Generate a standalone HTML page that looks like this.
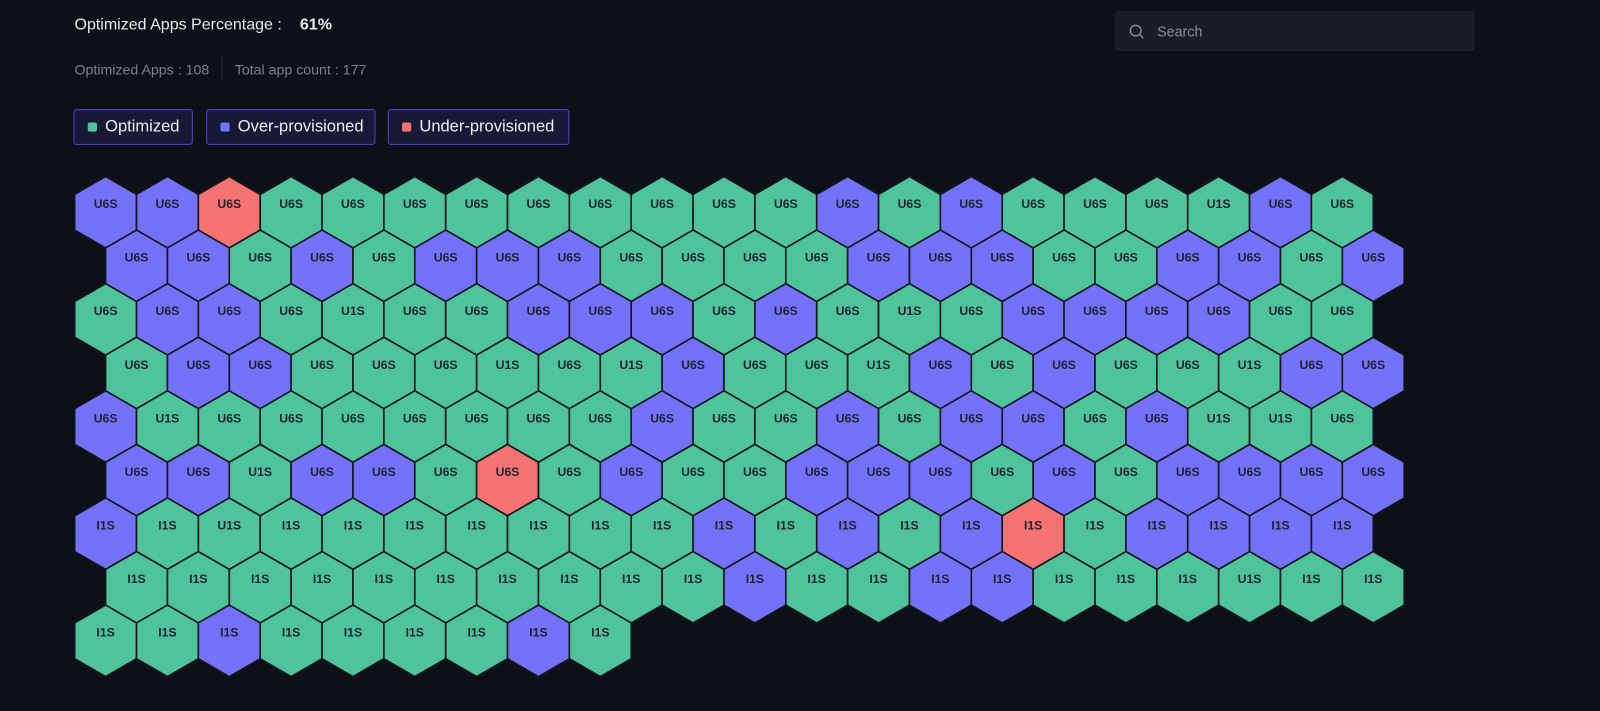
<!DOCTYPE html>
<html><head><meta charset="utf-8"><style>
body{margin:0;background:#0d1017;width:1600px;height:710px;overflow:hidden;font-family:"Liberation Sans",sans-serif}
#w{position:absolute;left:0;top:0;width:1568px;height:696px;transform:scale(1.0204);transform-origin:0 0}
.t1{position:absolute;left:73px;top:16px;font-size:15.7px;color:#e9eaee;font-weight:500}
.t1 b{margin-left:9px;font-weight:700}
.t2{position:absolute;left:73px;top:60px;font-size:13.9px;color:#7c7f89;display:flex}
.t2 .sep{width:1px;height:22px;background:#2a2d36;margin:-4px 12px 0}
.lg{position:absolute;top:107px;height:35px;border:1px solid #4b46c4;background:#181936;border-radius:3px;box-sizing:border-box;color:#eceef4;font-size:16.2px;display:flex;align-items:center;padding-left:13px}
.lg i{width:9px;height:9px;border-radius:2px;margin-right:8px;display:inline-block}
.srch{position:absolute;left:1093px;top:11px;width:352px;height:39px;background:#1a1d25;border:1px solid #20232c;border-radius:4px;box-sizing:border-box;color:#8a8d96;font-size:14px;display:flex;align-items:center;padding-left:12px}
svg.m{position:absolute;left:0;top:1px}
.g{fill:#4fc49c}.p{fill:#7472fa}.r{fill:#f77371}
use{stroke:#14171c;stroke-width:1.6}
text{font-family:"Liberation Sans",sans-serif;font-weight:700;font-size:12px;fill:#1f2330;text-anchor:middle;dominant-baseline:central}
</style></head><body><div id="w">
<div class="t1">Optimized Apps Percentage :&nbsp; <b>61%</b></div>
<div class="t2"><span>Optimized Apps : 108</span><span class="sep"></span><span>Total app count : 177</span></div>
<div class="lg" style="left:72px;width:117px"><i style="background:#4fc49c"></i>Optimized</div>
<div class="lg" style="left:202px;width:166px"><i style="background:#7472fa"></i>Over-provisioned</div>
<div class="lg" style="left:380px;width:178px"><i style="background:#f77371"></i>Under-provisioned</div>
<div class="srch"><svg style="margin-right:12px" width="16" height="16" viewBox="0 0 16 16"><circle cx="7" cy="7" r="5.2" fill="none" stroke="#8a8d96" stroke-width="1.4"/><path d="M11 11l3.5 3.5" stroke="#8a8d96" stroke-width="1.4"/></svg>Search</div>
<svg class="m" width="1568" height="696">
<defs><polygon id="h" points="0,-35 30.3,-17.5 30.3,17.5 0,35 -30.3,17.5 -30.3,-17.5"/></defs>
<g transform="translate(0,207)">
<use href="#h" x="103.5" class="p"/><use href="#h" x="164.1" class="p"/><use href="#h" x="224.7" class="r"/><use href="#h" x="285.3" class="g"/><use href="#h" x="345.9" class="g"/><use href="#h" x="406.5" class="g"/><use href="#h" x="467.1" class="g"/><use href="#h" x="527.7" class="g"/><use href="#h" x="588.3" class="g"/><use href="#h" x="648.9" class="g"/><use href="#h" x="709.5" class="g"/><use href="#h" x="770.1" class="g"/><use href="#h" x="830.7" class="p"/><use href="#h" x="891.3" class="g"/><use href="#h" x="951.9" class="p"/><use href="#h" x="1012.5" class="g"/><use href="#h" x="1073.1" class="g"/><use href="#h" x="1133.7" class="g"/><use href="#h" x="1194.3" class="g"/><use href="#h" x="1254.9" class="p"/><use href="#h" x="1315.5" class="g"/>
</g>
<g transform="translate(0,199)">
<text x="103.5">U6S</text><text x="164.1">U6S</text><text x="224.7">U6S</text><text x="285.3">U6S</text><text x="345.9">U6S</text><text x="406.5">U6S</text><text x="467.1">U6S</text><text x="527.7">U6S</text><text x="588.3">U6S</text><text x="648.9">U6S</text><text x="709.5">U6S</text><text x="770.1">U6S</text><text x="830.7">U6S</text><text x="891.3">U6S</text><text x="951.9">U6S</text><text x="1012.5">U6S</text><text x="1073.1">U6S</text><text x="1133.7">U6S</text><text x="1194.3">U1S</text><text x="1254.9">U6S</text><text x="1315.5">U6S</text>
</g>
<g transform="translate(0,259.5)">
<use href="#h" x="133.8" class="p"/><use href="#h" x="194.4" class="p"/><use href="#h" x="255" class="g"/><use href="#h" x="315.6" class="p"/><use href="#h" x="376.2" class="g"/><use href="#h" x="436.8" class="p"/><use href="#h" x="497.4" class="p"/><use href="#h" x="558" class="p"/><use href="#h" x="618.6" class="g"/><use href="#h" x="679.2" class="g"/><use href="#h" x="739.8" class="g"/><use href="#h" x="800.4" class="g"/><use href="#h" x="861" class="p"/><use href="#h" x="921.6" class="p"/><use href="#h" x="982.2" class="p"/><use href="#h" x="1042.8" class="g"/><use href="#h" x="1103.4" class="g"/><use href="#h" x="1164" class="p"/><use href="#h" x="1224.6" class="p"/><use href="#h" x="1285.2" class="g"/><use href="#h" x="1345.8" class="p"/>
</g>
<g transform="translate(0,251.5)">
<text x="133.8">U6S</text><text x="194.4">U6S</text><text x="255">U6S</text><text x="315.6">U6S</text><text x="376.2">U6S</text><text x="436.8">U6S</text><text x="497.4">U6S</text><text x="558">U6S</text><text x="618.6">U6S</text><text x="679.2">U6S</text><text x="739.8">U6S</text><text x="800.4">U6S</text><text x="861">U6S</text><text x="921.6">U6S</text><text x="982.2">U6S</text><text x="1042.8">U6S</text><text x="1103.4">U6S</text><text x="1164">U6S</text><text x="1224.6">U6S</text><text x="1285.2">U6S</text><text x="1345.8">U6S</text>
</g>
<g transform="translate(0,312)">
<use href="#h" x="103.5" class="g"/><use href="#h" x="164.1" class="p"/><use href="#h" x="224.7" class="p"/><use href="#h" x="285.3" class="g"/><use href="#h" x="345.9" class="g"/><use href="#h" x="406.5" class="g"/><use href="#h" x="467.1" class="g"/><use href="#h" x="527.7" class="p"/><use href="#h" x="588.3" class="p"/><use href="#h" x="648.9" class="p"/><use href="#h" x="709.5" class="g"/><use href="#h" x="770.1" class="p"/><use href="#h" x="830.7" class="g"/><use href="#h" x="891.3" class="g"/><use href="#h" x="951.9" class="g"/><use href="#h" x="1012.5" class="p"/><use href="#h" x="1073.1" class="p"/><use href="#h" x="1133.7" class="p"/><use href="#h" x="1194.3" class="p"/><use href="#h" x="1254.9" class="g"/><use href="#h" x="1315.5" class="g"/>
</g>
<g transform="translate(0,304)">
<text x="103.5">U6S</text><text x="164.1">U6S</text><text x="224.7">U6S</text><text x="285.3">U6S</text><text x="345.9">U1S</text><text x="406.5">U6S</text><text x="467.1">U6S</text><text x="527.7">U6S</text><text x="588.3">U6S</text><text x="648.9">U6S</text><text x="709.5">U6S</text><text x="770.1">U6S</text><text x="830.7">U6S</text><text x="891.3">U1S</text><text x="951.9">U6S</text><text x="1012.5">U6S</text><text x="1073.1">U6S</text><text x="1133.7">U6S</text><text x="1194.3">U6S</text><text x="1254.9">U6S</text><text x="1315.5">U6S</text>
</g>
<g transform="translate(0,364.5)">
<use href="#h" x="133.8" class="g"/><use href="#h" x="194.4" class="p"/><use href="#h" x="255" class="p"/><use href="#h" x="315.6" class="g"/><use href="#h" x="376.2" class="g"/><use href="#h" x="436.8" class="g"/><use href="#h" x="497.4" class="g"/><use href="#h" x="558" class="g"/><use href="#h" x="618.6" class="g"/><use href="#h" x="679.2" class="p"/><use href="#h" x="739.8" class="g"/><use href="#h" x="800.4" class="g"/><use href="#h" x="861" class="g"/><use href="#h" x="921.6" class="p"/><use href="#h" x="982.2" class="g"/><use href="#h" x="1042.8" class="p"/><use href="#h" x="1103.4" class="g"/><use href="#h" x="1164" class="g"/><use href="#h" x="1224.6" class="g"/><use href="#h" x="1285.2" class="p"/><use href="#h" x="1345.8" class="p"/>
</g>
<g transform="translate(0,356.5)">
<text x="133.8">U6S</text><text x="194.4">U6S</text><text x="255">U6S</text><text x="315.6">U6S</text><text x="376.2">U6S</text><text x="436.8">U6S</text><text x="497.4">U1S</text><text x="558">U6S</text><text x="618.6">U1S</text><text x="679.2">U6S</text><text x="739.8">U6S</text><text x="800.4">U6S</text><text x="861">U1S</text><text x="921.6">U6S</text><text x="982.2">U6S</text><text x="1042.8">U6S</text><text x="1103.4">U6S</text><text x="1164">U6S</text><text x="1224.6">U1S</text><text x="1285.2">U6S</text><text x="1345.8">U6S</text>
</g>
<g transform="translate(0,417)">
<use href="#h" x="103.5" class="p"/><use href="#h" x="164.1" class="g"/><use href="#h" x="224.7" class="g"/><use href="#h" x="285.3" class="g"/><use href="#h" x="345.9" class="g"/><use href="#h" x="406.5" class="g"/><use href="#h" x="467.1" class="g"/><use href="#h" x="527.7" class="g"/><use href="#h" x="588.3" class="g"/><use href="#h" x="648.9" class="p"/><use href="#h" x="709.5" class="g"/><use href="#h" x="770.1" class="g"/><use href="#h" x="830.7" class="p"/><use href="#h" x="891.3" class="g"/><use href="#h" x="951.9" class="p"/><use href="#h" x="1012.5" class="p"/><use href="#h" x="1073.1" class="g"/><use href="#h" x="1133.7" class="p"/><use href="#h" x="1194.3" class="g"/><use href="#h" x="1254.9" class="g"/><use href="#h" x="1315.5" class="g"/>
</g>
<g transform="translate(0,409)">
<text x="103.5">U6S</text><text x="164.1">U1S</text><text x="224.7">U6S</text><text x="285.3">U6S</text><text x="345.9">U6S</text><text x="406.5">U6S</text><text x="467.1">U6S</text><text x="527.7">U6S</text><text x="588.3">U6S</text><text x="648.9">U6S</text><text x="709.5">U6S</text><text x="770.1">U6S</text><text x="830.7">U6S</text><text x="891.3">U6S</text><text x="951.9">U6S</text><text x="1012.5">U6S</text><text x="1073.1">U6S</text><text x="1133.7">U6S</text><text x="1194.3">U1S</text><text x="1254.9">U1S</text><text x="1315.5">U6S</text>
</g>
<g transform="translate(0,469.5)">
<use href="#h" x="133.8" class="p"/><use href="#h" x="194.4" class="p"/><use href="#h" x="255" class="g"/><use href="#h" x="315.6" class="p"/><use href="#h" x="376.2" class="p"/><use href="#h" x="436.8" class="g"/><use href="#h" x="497.4" class="r"/><use href="#h" x="558" class="g"/><use href="#h" x="618.6" class="p"/><use href="#h" x="679.2" class="g"/><use href="#h" x="739.8" class="g"/><use href="#h" x="800.4" class="p"/><use href="#h" x="861" class="p"/><use href="#h" x="921.6" class="p"/><use href="#h" x="982.2" class="g"/><use href="#h" x="1042.8" class="p"/><use href="#h" x="1103.4" class="g"/><use href="#h" x="1164" class="p"/><use href="#h" x="1224.6" class="p"/><use href="#h" x="1285.2" class="p"/><use href="#h" x="1345.8" class="p"/>
</g>
<g transform="translate(0,461.5)">
<text x="133.8">U6S</text><text x="194.4">U6S</text><text x="255">U1S</text><text x="315.6">U6S</text><text x="376.2">U6S</text><text x="436.8">U6S</text><text x="497.4">U6S</text><text x="558">U6S</text><text x="618.6">U6S</text><text x="679.2">U6S</text><text x="739.8">U6S</text><text x="800.4">U6S</text><text x="861">U6S</text><text x="921.6">U6S</text><text x="982.2">U6S</text><text x="1042.8">U6S</text><text x="1103.4">U6S</text><text x="1164">U6S</text><text x="1224.6">U6S</text><text x="1285.2">U6S</text><text x="1345.8">U6S</text>
</g>
<g transform="translate(0,522)">
<use href="#h" x="103.5" class="p"/><use href="#h" x="164.1" class="g"/><use href="#h" x="224.7" class="g"/><use href="#h" x="285.3" class="g"/><use href="#h" x="345.9" class="g"/><use href="#h" x="406.5" class="g"/><use href="#h" x="467.1" class="g"/><use href="#h" x="527.7" class="g"/><use href="#h" x="588.3" class="g"/><use href="#h" x="648.9" class="g"/><use href="#h" x="709.5" class="p"/><use href="#h" x="770.1" class="g"/><use href="#h" x="830.7" class="p"/><use href="#h" x="891.3" class="g"/><use href="#h" x="951.9" class="p"/><use href="#h" x="1012.5" class="r"/><use href="#h" x="1073.1" class="g"/><use href="#h" x="1133.7" class="p"/><use href="#h" x="1194.3" class="p"/><use href="#h" x="1254.9" class="p"/><use href="#h" x="1315.5" class="p"/>
</g>
<g transform="translate(0,514)">
<text x="103.5">I1S</text><text x="164.1">I1S</text><text x="224.7">U1S</text><text x="285.3">I1S</text><text x="345.9">I1S</text><text x="406.5">I1S</text><text x="467.1">I1S</text><text x="527.7">I1S</text><text x="588.3">I1S</text><text x="648.9">I1S</text><text x="709.5">I1S</text><text x="770.1">I1S</text><text x="830.7">I1S</text><text x="891.3">I1S</text><text x="951.9">I1S</text><text x="1012.5">I1S</text><text x="1073.1">I1S</text><text x="1133.7">I1S</text><text x="1194.3">I1S</text><text x="1254.9">I1S</text><text x="1315.5">I1S</text>
</g>
<g transform="translate(0,574.5)">
<use href="#h" x="133.8" class="g"/><use href="#h" x="194.4" class="g"/><use href="#h" x="255" class="g"/><use href="#h" x="315.6" class="g"/><use href="#h" x="376.2" class="g"/><use href="#h" x="436.8" class="g"/><use href="#h" x="497.4" class="g"/><use href="#h" x="558" class="g"/><use href="#h" x="618.6" class="g"/><use href="#h" x="679.2" class="g"/><use href="#h" x="739.8" class="p"/><use href="#h" x="800.4" class="g"/><use href="#h" x="861" class="g"/><use href="#h" x="921.6" class="p"/><use href="#h" x="982.2" class="p"/><use href="#h" x="1042.8" class="g"/><use href="#h" x="1103.4" class="g"/><use href="#h" x="1164" class="g"/><use href="#h" x="1224.6" class="g"/><use href="#h" x="1285.2" class="g"/><use href="#h" x="1345.8" class="g"/>
</g>
<g transform="translate(0,566.5)">
<text x="133.8">I1S</text><text x="194.4">I1S</text><text x="255">I1S</text><text x="315.6">I1S</text><text x="376.2">I1S</text><text x="436.8">I1S</text><text x="497.4">I1S</text><text x="558">I1S</text><text x="618.6">I1S</text><text x="679.2">I1S</text><text x="739.8">I1S</text><text x="800.4">I1S</text><text x="861">I1S</text><text x="921.6">I1S</text><text x="982.2">I1S</text><text x="1042.8">I1S</text><text x="1103.4">I1S</text><text x="1164">I1S</text><text x="1224.6">U1S</text><text x="1285.2">I1S</text><text x="1345.8">I1S</text>
</g>
<g transform="translate(0,627)">
<use href="#h" x="103.5" class="g"/><use href="#h" x="164.1" class="g"/><use href="#h" x="224.7" class="p"/><use href="#h" x="285.3" class="g"/><use href="#h" x="345.9" class="g"/><use href="#h" x="406.5" class="g"/><use href="#h" x="467.1" class="g"/><use href="#h" x="527.7" class="p"/><use href="#h" x="588.3" class="g"/>
</g>
<g transform="translate(0,619)">
<text x="103.5">I1S</text><text x="164.1">I1S</text><text x="224.7">I1S</text><text x="285.3">I1S</text><text x="345.9">I1S</text><text x="406.5">I1S</text><text x="467.1">I1S</text><text x="527.7">I1S</text><text x="588.3">I1S</text>
</g>
</svg>
</div></body></html>
